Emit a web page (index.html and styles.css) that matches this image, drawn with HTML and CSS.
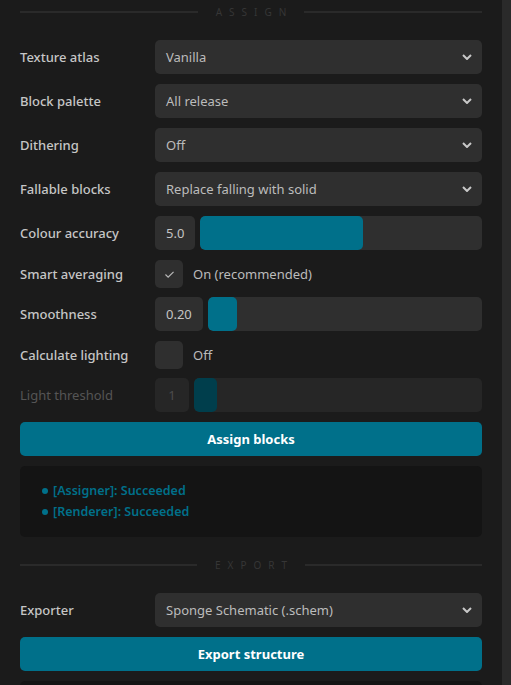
FILE: index.html
```html
<!DOCTYPE html>
<html lang="en">
<head>
  <meta charset="UTF-8">
  <title>Assign / Export</title>
  <link rel="stylesheet" href="styles.css">
</head>
<body>
  <div class="panel">
    <div class="section-title"><span>ASSIGN</span></div>

    <div class="row">
      <div class="label">Texture atlas</div>
      <div class="select">Vanilla<svg class="chev" viewBox="0 0 10 6"><path d="M1 1l4 4 4-4"/></svg></div>
    </div>
    <div class="row">
      <div class="label">Block palette</div>
      <div class="select">All release<svg class="chev" viewBox="0 0 10 6"><path d="M1 1l4 4 4-4"/></svg></div>
    </div>
    <div class="row">
      <div class="label">Dithering</div>
      <div class="select">Off<svg class="chev" viewBox="0 0 10 6"><path d="M1 1l4 4 4-4"/></svg></div>
    </div>
    <div class="row">
      <div class="label">Fallable blocks</div>
      <div class="select">Replace falling with solid<svg class="chev" viewBox="0 0 10 6"><path d="M1 1l4 4 4-4"/></svg></div>
    </div>
    <div class="row">
      <div class="label">Colour accuracy</div>
      <div class="slider-wrap">
        <div class="num">5.0</div>
        <div class="track"><div class="fill" style="width: 57.6%"></div></div>
      </div>
    </div>
    <div class="row short">
      <div class="label">Smart averaging</div>
      <div class="toggle">
        <div class="checkbox"><svg viewBox="0 0 12 10"><path d="M1.5 5l3 3 6-6"/></svg></div>
        <span>On (recommended)</span>
      </div>
    </div>
    <div class="row">
      <div class="label">Smoothness</div>
      <div class="slider-wrap">
        <div class="num">0.20</div>
        <div class="track"><div class="fill" style="width: 10.6%"></div></div>
      </div>
    </div>
    <div class="row short">
      <div class="label">Calculate lighting</div>
      <div class="toggle">
        <div class="checkbox"></div>
        <span>Off</span>
      </div>
    </div>
    <div class="row disabled">
      <div class="label">Light threshold</div>
      <div class="slider-wrap">
        <div class="num">1</div>
        <div class="track"><div class="fill" style="width: 8%"></div></div>
      </div>
    </div>

    <button class="action">Assign blocks</button>

    <div class="log">
      <ul>
        <li>[Assigner]: Succeeded</li>
        <li>[Renderer]: Succeeded</li>
      </ul>
    </div>

    <div class="section-title export"><span>EXPORT</span></div>

    <div class="row">
      <div class="label">Exporter</div>
      <div class="select">Sponge Schematic (.schem)<svg class="chev" viewBox="0 0 10 6"><path d="M1 1l4 4 4-4"/></svg></div>
    </div>

    <button class="action">Export structure</button>

    <div class="log tail"></div>
  </div>
  <div class="scrollbar"></div>
</body>
</html>
```

FILE: styles.css
```css
body {
  margin: 0;
  background: #1b1b1b;
  font-family: "Noto Sans", Arial, sans-serif;
  font-size: 13px;
  color: #c4c4c4;
  display: flex;
  height: 685px;
  overflow: hidden;
}
.panel {
  width: 502px;
  box-sizing: border-box;
  padding: 0 20px;
  flex-shrink: 0;
}
.scrollbar {
  flex: 1;
  background: #2a2a2a;
}

.section-title {
  display: flex;
  align-items: center;
  gap: 11px;
  height: 24px;
  margin: 0 0 16px;
  font-size: 10px;
  letter-spacing: 7px;
  color: #363636;
}
.section-title::before, .section-title::after {
  content: "";
  flex: 1;
  height: 2px;
  background: #2a2a2a;
}
.section-title span { padding-left: 7px; }
.section-title.export { margin: 16px 0 16px; }

.row {
  display: grid;
  grid-template-columns: 135px 1fr;
  align-items: center;
  min-height: 34px;
  margin-bottom: 10px;
}
.row.short { min-height: 28px; margin-bottom: 9px; }
.label {
  font-weight: 500;
  color: #c6c6c6;
}
.select {
  height: 34px;
  background: #2f2f2f;
  border-radius: 5px;
  display: flex;
  align-items: center;
  padding: 0 10px 0 11px;
  color: #bcbcbc;
}
.chev {
  margin-left: auto;
  width: 10px;
  height: 6px;
  fill: none;
  stroke: #c8c8c8;
  stroke-width: 2;
}

.slider-wrap {
  display: flex;
  gap: 5px;
  height: 34px;
}
.num {
  background: #2f2f2f;
  border-radius: 5px;
  padding: 0 11px;
  min-width: 12px;
  display: flex;
  align-items: center;
  justify-content: center;
  color: #c4c4c4;
}
.track {
  flex: 1;
  background: #2f2f2f;
  border-radius: 5px;
  overflow: hidden;
}
.fill {
  height: 100%;
  background: #00708a;
  border-radius: 5px;
}
.disabled .label { color: #555; font-weight: 400; }
.disabled .num { background: #262626; color: #4c4c4c; }
.disabled .track { background: #262626; }
.disabled .fill { background: #003e4c; }

.toggle {
  display: flex;
  align-items: center;
  gap: 10px;
  color: #bcbcbc;
}
.checkbox {
  width: 28px;
  height: 28px;
  background: #2f2f2f;
  border-radius: 5px;
  display: flex;
  align-items: center;
  justify-content: center;
}
.checkbox svg {
  width: 11px;
  height: 9px;
  fill: none;
  stroke: #b8b8b8;
  stroke-width: 1.3;
}

.action {
  display: block;
  width: 100%;
  height: 34px;
  border: none;
  border-radius: 5px;
  background: #00708a;
  color: #fff;
  font-family: inherit;
  font-size: 13px;
  font-weight: 700;
  margin: 0 0 10px;
}

.log {
  background: #141414;
  border-radius: 5px;
  height: 71px;
  box-sizing: border-box;
  padding: 14px 0 0;
}
.log ul {
  margin: 0;
  padding-left: 36px;
  list-style: none;
}
.log li {
  color: #00708a;
  font-weight: 600;
  font-size: 12.5px;
  line-height: 21px;
  display: flex;
  align-items: center;
}
.log li::before {
  content: "";
  width: 6px;
  height: 6px;
  border-radius: 50%;
  background: #00708a;
  margin: 0 5px 0 -14px;
  flex-shrink: 0;
}
.log.tail { height: 20px; margin-top: 0; }
```
